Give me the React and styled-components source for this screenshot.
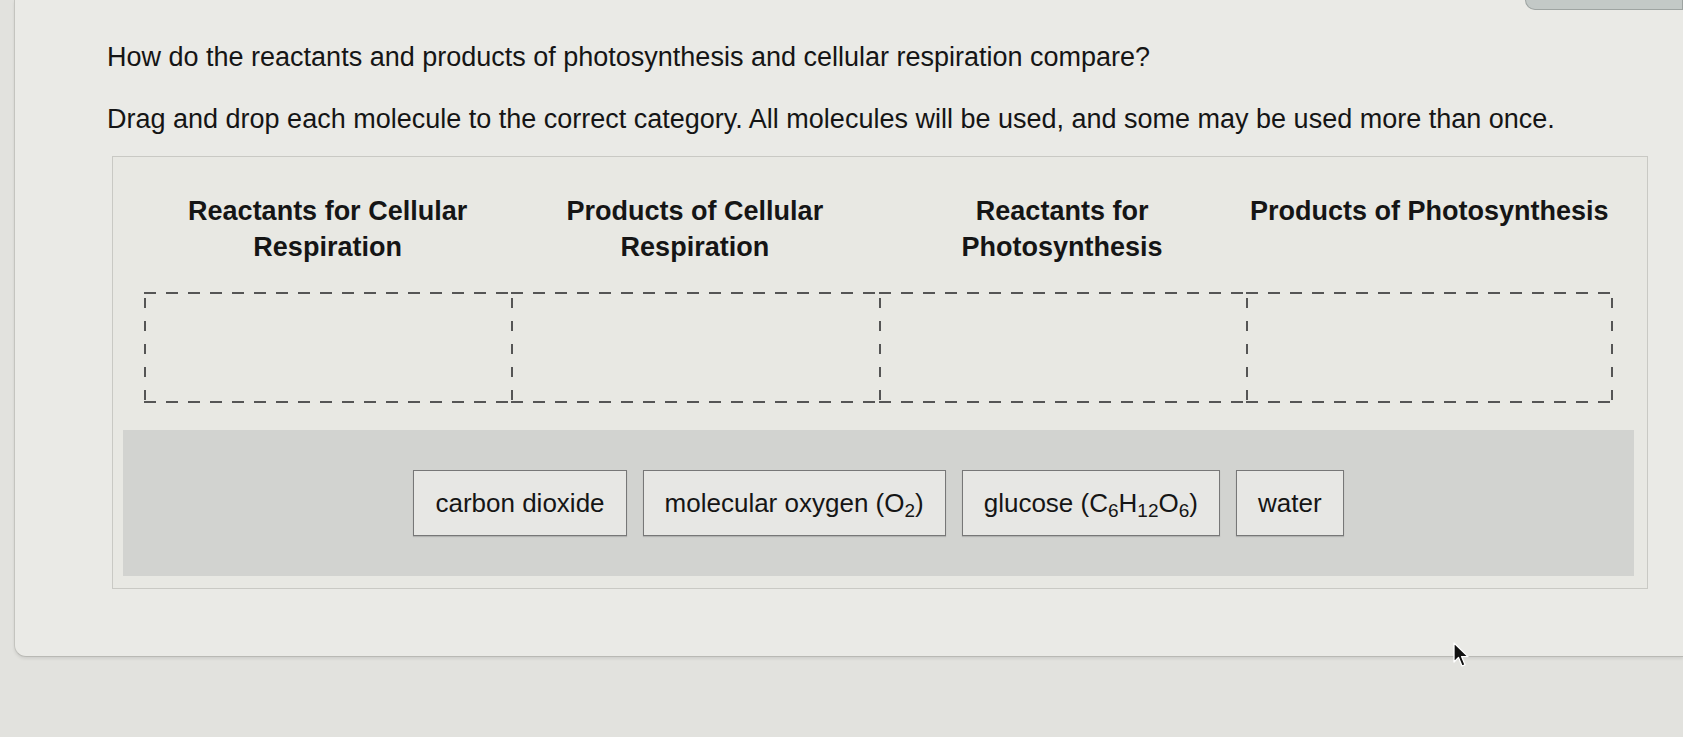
import React from 'react';
import styled, { createGlobalStyle } from 'styled-components';

const GlobalStyle = createGlobalStyle`
  html, body {
    margin: 0;
    padding: 0;
    background: #e2e2de;
    font-family: "Liberation Sans", Arial, sans-serif;
    color: #151515;
    overflow: hidden;
  }
`;

const Page = styled.div`
  position: relative;
  width: 1683px;
  height: 737px;
`;

const Card = styled.div`
  margin-left: 14px;
  background: #eaeae6;
  border-left: 1px solid #c4c4bf;
  border-bottom: 1px solid #b9b9b4;
  border-bottom-left-radius: 12px;
  box-shadow: 0 2px 3px rgba(0, 0, 0, 0.08);
  padding: 0 0 67px 92px;
`;

const TopBar = styled.div`
  display: flex;
  justify-content: flex-end;
  height: 10px;
`;

const TopButton = styled.div`
  width: 156px;
  height: 9px;
  background: #c3c9c7;
  border: 1px solid #9ea4a2;
  border-top: none;
  border-bottom-left-radius: 10px;
`;

const Question = styled.p`
  margin: 32px 0 0;
  font-size: 27px;
  line-height: 30px;
`;

const Instructions = styled.p`
  margin: 32px 0 0;
  font-size: 27px;
  line-height: 30px;
`;

const Panel = styled.div`
  margin: 22px 0 0 5px;
  width: 1536px;
  box-sizing: border-box;
  border: 1px solid #c9c9c4;
  background: #e8e8e3;
  padding: 36px 0 12px;
`;

const Headers = styled.div`
  display: grid;
  grid-template-columns: repeat(4, 1fr);
  padding: 0 34px 0 31px;
`;

const Header = styled.div`
  text-align: center;
  font-weight: 700;
  font-size: 27px;
  line-height: 36px;
  height: 72px;
`;

const Zones = styled.div`
  display: grid;
  grid-template-columns: repeat(4, 1fr);
  margin: 27px 34px 0 31px;
  height: 111px;
`;

const dash = '#555555';

const Zone = styled.div`
  background-image:
    linear-gradient(to right, ${dash} 55%, transparent 55%),
    linear-gradient(to right, ${dash} 55%, transparent 55%),
    linear-gradient(to bottom, ${dash} 45%, transparent 45%)
    ${(p) => (p.$last ? `, linear-gradient(to bottom, ${dash} 45%, transparent 45%)` : '')};
  background-size: 22px 2px, 22px 2px, 2px 23px ${(p) => (p.$last ? ', 2px 23px' : '')};
  background-position: 0 0, 0 100%, 0 6px ${(p) => (p.$last ? ', 100% 6px' : '')};
  background-repeat: repeat-x, repeat-x, repeat-y ${(p) => (p.$last ? ', repeat-y' : '')};
`;

const Bank = styled.div`
  margin: 27px 13px 0 10px;
  height: 146px;
  background: #d2d3d0;
  display: flex;
  align-items: center;
  justify-content: center;
  gap: 16px;
`;

const Chip = styled.div`
  padding: 17px 21px;
  font-size: 26px;
  line-height: 30px;
  background: #e7e7e4;
  border: 1px solid #777;
  box-shadow: 0 1px 1px rgba(0, 0, 0, 0.15);
  white-space: nowrap;

  sub {
    font-size: 19px;
    line-height: 0;
    vertical-align: -5px;
  }
`;

const Cursor = styled.svg`
  position: absolute;
  left: 1453px;
  top: 642px;
`;

const headers = [
  ['Reactants for Cellular', 'Respiration'],
  ['Products of Cellular', 'Respiration'],
  ['Reactants for', 'Photosynthesis'],
  ['Products of Photosynthesis'],
];

export default function App() {
  return (
    <Page>
      <GlobalStyle />
      <Card>
        <TopBar>
          <TopButton />
        </TopBar>
        <Question>
          How do the reactants and products of photosynthesis and cellular respiration compare?
        </Question>
        <Instructions>
          Drag and drop each molecule to the correct category. All molecules will be used, and some may be used more than once.
        </Instructions>
        <Panel>
          <Headers>
            {headers.map((lines, i) => (
              <Header key={i}>
                {lines.map((l, j) => (
                  <div key={j}>{l}</div>
                ))}
              </Header>
            ))}
          </Headers>
          <Zones>
            <Zone />
            <Zone />
            <Zone />
            <Zone $last />
          </Zones>
          <Bank>
            <Chip>carbon dioxide</Chip>
            <Chip>
              molecular oxygen (O<sub>2</sub>)
            </Chip>
            <Chip>
              glucose (C<sub>6</sub>H<sub>12</sub>O<sub>6</sub>)
            </Chip>
            <Chip>water</Chip>
          </Bank>
        </Panel>
      </Card>
      <Cursor width="16" height="26" viewBox="0 0 16 26">
        <path d="M1 1 L1 20 L5.5 15.5 L9 24 L12 22.8 L8.6 14.6 L15 14.6 Z" fill="#111" stroke="#fff" strokeWidth="1.3" strokeLinejoin="round" />
      </Cursor>
    </Page>
  );
}
